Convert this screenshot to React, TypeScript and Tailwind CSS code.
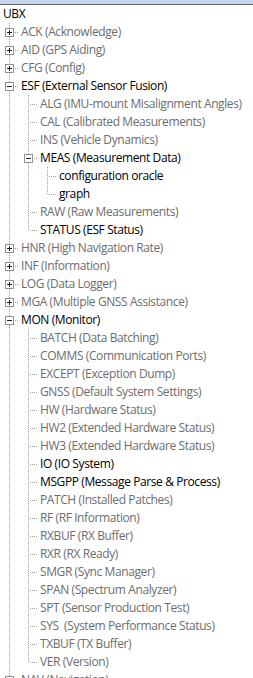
import React from "react";

type Node = {
  label: string;
  dark?: boolean;
  expanded?: boolean;
  hasChildren?: boolean;
  children?: Node[];
};

const g = (label: string): Node => ({ label });
const d = (label: string): Node => ({ label, dark: true });

const tree: Node[] = [
  { label: "ACK (Acknowledge)", hasChildren: true },
  { label: "AID (GPS Aiding)", hasChildren: true },
  { label: "CFG (Config)", hasChildren: true },
  {
    label: "ESF (External Sensor Fusion)",
    dark: true,
    hasChildren: true,
    expanded: true,
    children: [
      g("ALG (IMU-mount Misalignment Angles)"),
      g("CAL (Calibrated Measurements)"),
      g("INS (Vehicle Dynamics)"),
      {
        label: "MEAS (Measurement Data)",
        dark: true,
        hasChildren: true,
        expanded: true,
        children: [d("configuration oracle"), d("graph")],
      },
      g("RAW (Raw Measurements)"),
      d("STATUS (ESF Status)"),
    ],
  },
  { label: "HNR (High Navigation Rate)", hasChildren: true },
  { label: "INF (Information)", hasChildren: true },
  { label: "LOG (Data Logger)", hasChildren: true },
  { label: "MGA (Multiple GNSS Assistance)", hasChildren: true },
  {
    label: "MON (Monitor)",
    dark: true,
    hasChildren: true,
    expanded: true,
    children: [
      g("BATCH (Data Batching)"),
      g("COMMS (Communication Ports)"),
      g("EXCEPT (Exception Dump)"),
      g("GNSS (Default System Settings)"),
      g("HW (Hardware Status)"),
      g("HW2 (Extended Hardware Status)"),
      g("HW3 (Extended Hardware Status)"),
      d("IO (IO System)"),
      d("MSGPP (Message Parse & Process)"),
      g("PATCH (Installed Patches)"),
      g("RF (RF Information)"),
      g("RXBUF (RX Buffer)"),
      g("RXR (RX Ready)"),
      g("SMGR (Sync Manager)"),
      g("SPAN (Spectrum Analyzer)"),
      g("SPT (Sensor Production Test)"),
      g("SYS\u00a0\u00a0(System Performance Status)"),
      g("TXBUF (TX Buffer)"),
      g("VER (Version)"),
    ],
  },
  { label: "NAV (Navigation)", hasChildren: true },
  { label: "RXM (Receiver Manager)", hasChildren: true },
];

type Row = { node: Node; guides: boolean[]; last: boolean };

function flatten(nodes: Node[], guides: boolean[], out: Row[]) {
  nodes.forEach((n, i) => {
    const last = i === nodes.length - 1;
    out.push({ node: n, guides, last });
    if (n.expanded && n.children) flatten(n.children, [...guides, !last], out);
  });
}

const LINE = "#a0a0a0";

function GuideColumn({ cont }: { cont: boolean }) {
  return (
    <svg width="19" height="18" className="shrink-0" shapeRendering="crispEdges">
      {cont && <line x1="9.5" y1="0" x2="9.5" y2="18" stroke={LINE} strokeDasharray="1 1" />}
    </svg>
  );
}

function ElbowColumn({ last, box, open }: { last: boolean; box: boolean; open: boolean }) {
  return (
    <svg width="19" height="18" className="shrink-0" shapeRendering="crispEdges">
      <line x1="9.5" y1="0" x2="9.5" y2={last ? 10 : 18} stroke={LINE} strokeDasharray="1 1" />
      <line x1="11" y1="9.5" x2="19" y2="9.5" stroke={LINE} strokeDasharray="1 1" />
      {box && (
        <>
          <rect x="5.5" y="5.5" width="8" height="8" fill="#ffffff" stroke="#919191" />
          <line x1="7" y1="9.5" x2="12" y2="9.5" stroke="#1e1e1e" />
          {!open && <line x1="9.5" y1="7" x2="9.5" y2="12" stroke="#1e1e1e" />}
        </>
      )}
    </svg>
  );
}

function TreeRow({ row }: { row: Row }) {
  const { node, guides, last } = row;
  return (
    <div className="flex h-[18px] items-center">
      {guides.map((cont, i) => (
        <GuideColumn key={i} cont={cont} />
      ))}
      <ElbowColumn last={last} box={!!node.hasChildren} open={!!node.expanded} />
      <span
        className={`ml-[2px] whitespace-nowrap leading-[18px] ${node.dark ? "text-[#000000]" : "text-[#6d6d6d]"}`}
      >
        {node.label}
      </span>
    </div>
  );
}

export default function App() {
  const rows: Row[] = [];
  flatten(tree, [], rows);
  return (
    <div
      className="flex flex-col w-[253px] h-[678px] overflow-hidden bg-white text-[12px] tracking-[-0.4px]"
      style={{ fontFamily: '"Open Sans", "Noto Sans", sans-serif' }}
    >
      <div className="h-[4px] shrink-0 bg-[#c5d7ec]" />
      <div className="h-px shrink-0 bg-[#646464]" />
      <div className="flex h-[18px] shrink-0 items-center pl-[3px] text-[#000000] leading-[18px]">UBX</div>
      {rows.map((r, i) => (
        <div key={i} className="shrink-0">
          <TreeRow row={r} />
        </div>
      ))}
    </div>
  );
}
